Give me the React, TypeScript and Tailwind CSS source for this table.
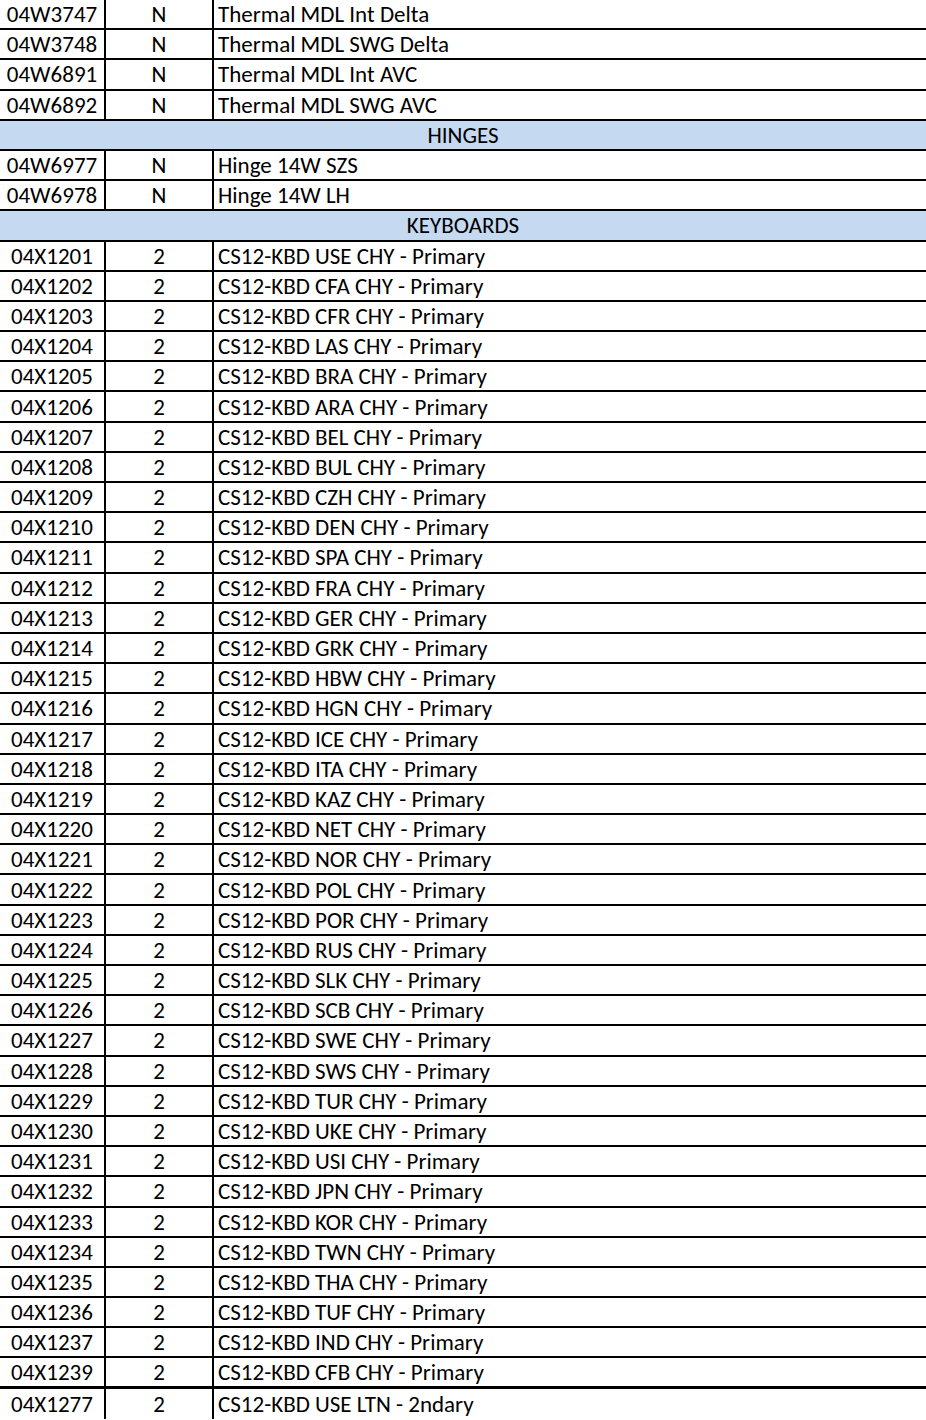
import React from "react";

type Row =
  | { kind: "item"; pn: string; qty: string; desc: string }
  | { kind: "header"; label: string };

const kbdCodes = [
  "USE", "CFA", "CFR", "LAS", "BRA", "ARA", "BEL", "BUL", "CZH", "DEN",
  "SPA", "FRA", "GER", "GRK", "HBW", "HGN", "ICE", "ITA", "KAZ", "NET",
  "NOR", "POL", "POR", "RUS", "SLK", "SCB", "SWE", "SWS", "TUR", "UKE",
  "USI", "JPN", "KOR", "TWN", "THA", "TUF", "IND",
];

const rows: Row[] = [
  { kind: "item", pn: "04W3747", qty: "N", desc: "Thermal MDL Int Delta" },
  { kind: "item", pn: "04W3748", qty: "N", desc: "Thermal MDL SWG Delta" },
  { kind: "item", pn: "04W6891", qty: "N", desc: "Thermal MDL Int AVC" },
  { kind: "item", pn: "04W6892", qty: "N", desc: "Thermal MDL SWG AVC" },
  { kind: "header", label: "HINGES" },
  { kind: "item", pn: "04W6977", qty: "N", desc: "Hinge 14W SZS" },
  { kind: "item", pn: "04W6978", qty: "N", desc: "Hinge 14W LH" },
  { kind: "header", label: "KEYBOARDS" },
  ...kbdCodes.map((c, i): Row => ({
    kind: "item",
    pn: `04X${1201 + i}`,
    qty: "2",
    desc: `CS12-KBD ${c} CHY - Primary`,
  })),
  { kind: "item", pn: "04X1239", qty: "2", desc: "CS12-KBD CFB CHY - Primary" },
  { kind: "item", pn: "04X1277", qty: "2", desc: "CS12-KBD USE LTN - 2ndary" },
];

export default function App() {
  return (
    <div
      className="w-[926px] h-[1420px] overflow-hidden bg-white text-black text-[23px] leading-none"
      style={{ fontFamily: "Carlito, Calibri, 'Open Sans', sans-serif" }}
    >
      {rows.map((r, i) => {
        const last = i === rows.length - 1;
        const beforeLast = i === rows.length - 2;
        const border = last ? "" : beforeLast ? "border-b-[3px] border-black" : "border-b-2 border-black";
        if (r.kind === "header") {
          return (
            <div
              key={i}
              className={`h-[30.2px] flex items-center justify-center bg-[#c5d9f1] pt-[1px] ${border}`}
            >
              {r.label}
            </div>
          );
        }
        return (
          <div key={i} className={`h-[30.2px] grid grid-cols-[106px_108px_1fr] ${border}`}>
            <div className="flex items-center justify-center border-r-2 border-black pt-[1px]">{r.pn}</div>
            <div className="flex items-center justify-center border-r-2 border-black pt-[1px]">{r.qty}</div>
            <div className="flex items-center pl-[4px] pt-[1px] whitespace-nowrap">{r.desc}</div>
          </div>
        );
      })}
    </div>
  );
}
